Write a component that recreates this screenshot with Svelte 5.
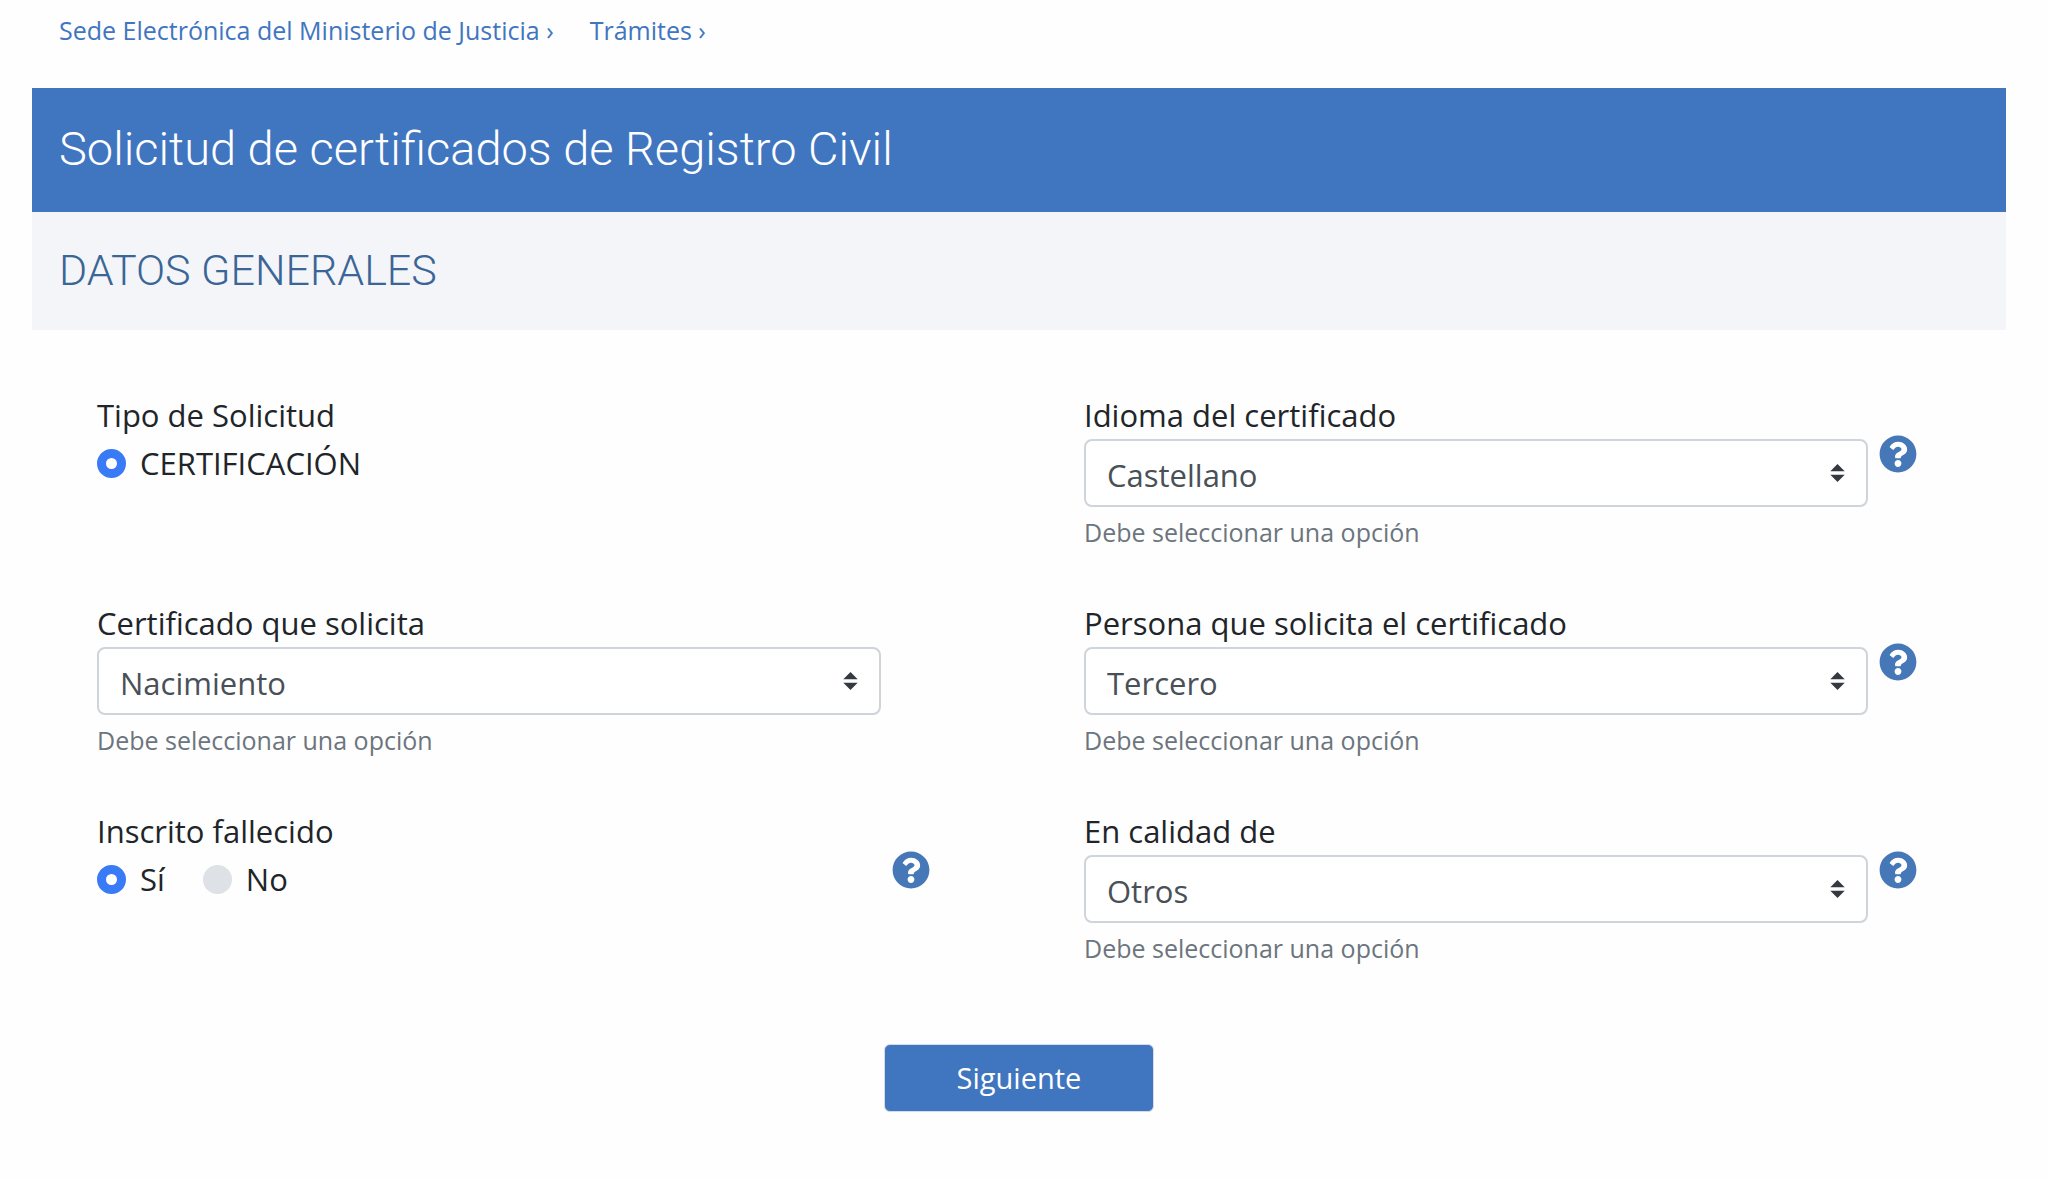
<script>
	let values = $state({
		tipo: 'certificacion',
		idioma: 'Castellano',
		certificado: 'Nacimiento',
		persona: 'Tercero',
		fallecido: 'si',
		calidad: 'Otros'
	});

	const fields = [
		{
			id: 'tipo',
			label: 'Tipo de Solicitud',
			radios: [{ value: 'certificacion', text: 'CERTIFICACIÓN' }]
		},
		{ id: 'idioma', label: 'Idioma del certificado', options: ['Castellano'], help: true },
		{ id: 'certificado', label: 'Certificado que solicita', options: ['Nacimiento'] },
		{ id: 'persona', label: 'Persona que solicita el certificado', options: ['Tercero'], help: true },
		{
			id: 'fallecido',
			label: 'Inscrito fallecido',
			radios: [
				{ value: 'si', text: 'Sí' },
				{ value: 'no', text: 'No' }
			],
			help: true
		},
		{ id: 'calidad', label: 'En calidad de', options: ['Otros'], help: true }
	];

	function onsubmit(event) {
		event.preventDefault();
	}
</script>

<div class="page">
	<nav class="breadcrumb">
		<a href="#sede">Sede Electrónica del Ministerio de Justicia ›</a>
		<a href="#tramites">Trámites ›</a>
	</nav>

	<main>
		<h1>Solicitud de certificados de Registro Civil</h1>
		<h2>DATOS GENERALES</h2>

		<form {onsubmit}>
			<div class="fields">
				{#each fields as field}
					<div class="field">
						{#if field.radios}
							<fieldset>
								<legend>{field.label}</legend>
								<div class="radios">
									{#each field.radios as radio}
										<label class="radio">
											<input
												type="radio"
												name={field.id}
												value={radio.value}
												bind:group={values[field.id]}
											/>
											{radio.text}
										</label>
									{/each}
								</div>
							</fieldset>
						{:else}
							<div class="control">
								<label for={field.id}>{field.label}</label>
								<select id={field.id} bind:value={values[field.id]}>
									{#each field.options as option}
										<option value={option}>{option}</option>
									{/each}
								</select>
								<small>Debe seleccionar una opción</small>
							</div>
						{/if}
						{#if field.help}
							<button type="button" class="help" aria-label="Ayuda">
								<svg viewBox="0 0 512 512" aria-hidden="true">
									<path
										d="M504 256c0 136.997-111.043 248-248 248S8 392.997 8 256C8 119.083 119.043 8 256 8s248 111.083 248 248zM262.655 90c-54.497 0-89.255 22.957-116.549 63.758-3.536 5.286-2.353 12.415 2.715 16.258l34.699 26.31c5.205 3.947 12.621 3.008 16.665-2.122 17.864-22.658 30.113-35.797 57.303-35.797 20.429 0 45.698 13.148 45.698 32.958 0 14.976-12.363 22.667-32.534 33.976C247.128 238.528 216 254.941 216 296v4c0 6.627 5.373 12 12 12h56c6.627 0 12-5.373 12-12v-1.333c0-28.462 83.186-29.647 83.186-106.667 0-58.002-60.165-102-116.531-102zM256 338c-25.365 0-46 20.635-46 46 0 25.364 20.635 46 46 46s46-20.636 46-46c0-25.364-20.635-46-46-46z"
									/>
								</svg>
							</button>
						{/if}
					</div>
				{/each}
			</div>

			<button type="submit" class="submit">Siguiente</button>
		</form>
	</main>
</div>

<style>
	:global(body) {
		background-color: #fefefe;
	}

	.page {
		padding: 11px 42px 60px 32px;
		color: #212529;
		font-family: 'Open Sans', sans-serif;
		font-size: 31px;
		line-height: 48px;
	}

	.breadcrumb {
		display: flex;
		gap: 36px;
		padding: 0 27px;
		margin-bottom: 39px;
		font-size: 25px;
		line-height: 38px;
	}

	.breadcrumb a {
		color: #4075c0;
		text-decoration: none;
	}

	h1,
	h2 {
		margin: 0;
		padding: 31px 27px 33px;
		font-family: Roboto, sans-serif;
		font-weight: 300;
	}

	h1 {
		background-color: #4075c0;
		color: #fff;
		font-size: 47px;
		line-height: 60px;
	}

	h2 {
		background-color: #f3f5f9;
		color: #3b6596;
		font-size: 43px;
		line-height: 54px;
	}

	.fields {
		display: grid;
		grid-template-columns: 1fr 1fr;
		row-gap: 45px;
		margin-top: 61px;
	}

	.field {
		display: grid;
		grid-template-columns: 1fr 38px;
		align-items: start;
		column-gap: 11px;
		min-height: 163px;
		padding: 0 89px 0 65px;
	}

	.control {
		display: flex;
		flex-direction: column;
	}

	fieldset {
		min-width: 0;
		margin: 0;
		padding: 0;
		border: none;
	}

	legend {
		padding: 0;
	}

	select {
		width: 100%;
		height: 68px;
		padding: 4px 21px 0;
		appearance: none;
		border: 2px solid #ced4da;
		border-radius: 8px;
		background: #fff
			url("data:image/svg+xml,%3csvg xmlns='http://www.w3.org/2000/svg' viewBox='0 0 4 5'%3e%3cpath fill='%23343a40' d='M2 0L0 2h4zm0 5L0 3h4z'/%3e%3c/svg%3e")
			no-repeat right 21px center / 15px 18px;
		color: #495057;
		font: inherit;
	}

	small {
		margin-top: 7px;
		color: #6c757d;
		font-size: 25px;
		line-height: 36px;
	}

	.radios {
		display: flex;
		gap: 38px;
	}

	.radio {
		display: flex;
		align-items: center;
		gap: 14px;
	}

	.radio input {
		width: 29px;
		height: 29px;
		margin: 0;
		appearance: none;
		border-radius: 50%;
		background-color: #dee2e6;
	}

	.radio input:checked {
		border: 9px solid #397bf7;
		background-color: #fff;
	}

	.help {
		margin-top: 44px;
		padding: 0;
		border: none;
		background: none;
		cursor: pointer;
	}

	.help svg {
		display: block;
		width: 38px;
		height: 38px;
		fill: #4678b7;
	}

	.submit {
		display: block;
		margin: 74px auto 0;
		padding: 10px 72px;
		border: 1px solid #d5dbe8;
		border-radius: 6px;
		background-color: #4075c0;
		color: #fff;
		font-family: inherit;
		font-size: 29px;
		line-height: 46px;
		cursor: pointer;
	}
</style>
